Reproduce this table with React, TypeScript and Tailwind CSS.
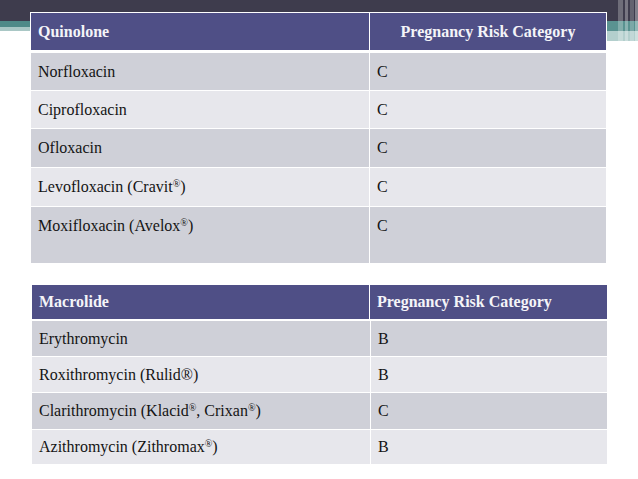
import React from "react";

type Row = { name: React.ReactNode; cat: string; h: string; top?: boolean };

const Reg = () => <sup className="text-[10px]">®</sup>;

const quinolones: Row[] = [
  { name: "Norfloxacin", cat: "C", h: "h-[37px]" },
  { name: "Ciprofloxacin", cat: "C", h: "h-[37px]" },
  { name: "Ofloxacin", cat: "C", h: "h-[38px]" },
  { name: <>Levofloxacin (Cravit<Reg />)</>, cat: "C", h: "h-[38px]" },
  { name: <>Moxifloxacin (Avelox<Reg />)</>, cat: "C", h: "h-[56px]", top: true },
];

const macrolides: Row[] = [
  { name: "Erythromycin", cat: "B", h: "h-[35px]" },
  { name: "Roxithromycin (Rulid®)", cat: "B", h: "h-[35px]" },
  { name: <>Clarithromycin (Klacid<Reg />, Crixan<Reg />)</>, cat: "C", h: "h-[36px]" },
  { name: <>Azithromycin (Zithromax<Reg />)</>, cat: "B", h: "h-[34px]" },
];

function BodyRow({ r, i }: { r: Row; i: number }) {
  const bg = i % 2 === 0 ? "bg-[#cfd0d8]" : "bg-[#e7e7ec]";
  const align = r.top ? "items-start pt-[9px]" : "items-center";
  return (
    <div className={`flex gap-px ${r.h}`}>
      <div className={`w-[338px] flex ${align} pl-[7px] ${bg}`}>
        <span>{r.name}</span>
      </div>
      <div className={`flex-1 flex ${align} pl-[7px] ${bg}`}>
        <span>{r.cat}</span>
      </div>
    </div>
  );
}

export default function App() {
  return (
    <div className="font-serif">
      <div className="relative w-[638px] h-[479px] bg-white overflow-hidden font-['Liberation_Serif'] text-[16px] leading-[20px] text-[#141414]">
        {/* slide background decoration */}
        <div className="absolute left-0 top-0 w-full h-[21px] bg-[#3e3c4d]" />
        <div className="absolute left-0 top-[21px] w-full h-[6px] bg-[#4f8a88]" />
        <div className="absolute left-0 top-[27px] w-full h-[4px] bg-[#a9c7c5]" />
        <div className="absolute left-[606px] top-[21px] w-[32px] h-[10px] bg-[#5a9391]" />
        <div className="absolute left-[606px] top-[31px] w-[32px] h-[10px] bg-[#b3cfcd]" />
        <div className="absolute left-[618px] top-0 w-[5px] h-[43px] bg-white/25" />
        <div className="absolute left-[625px] top-0 w-[3px] h-[43px] bg-white/30" />
        <div className="absolute left-[630px] top-0 w-[4px] h-[43px] bg-white/20" />
        <div className="absolute left-[635px] top-0 w-[3px] h-[43px] bg-white/35" />

        <div className="relative flex flex-col pt-[12px] pl-[30px]">
          {/* Quinolone table */}
          <div className="w-[577px] border border-white bg-white flex flex-col">
            <div className="flex gap-px h-[37px] font-bold text-[#f4f4f8]">
              <div className="w-[338px] flex items-center pl-[7px] bg-[#4f4f86]">Quinolone</div>
              <div className="flex-1 flex items-center justify-center bg-[#4f4f86]">Pregnancy Risk Category</div>
            </div>
            <div className="flex flex-col gap-px mt-[3px]">
              {quinolones.map((r, i) => (
                <BodyRow key={i} r={r} i={i} />
              ))}
            </div>
          </div>

          {/* Macrolide table */}
          <div className="w-[575px] ml-[2px] mt-[21px] bg-white flex flex-col">
            <div className="flex gap-px h-[34px] font-bold text-[#f4f4f8]">
              <div className="w-[337px] flex items-center pl-[7px] bg-[#4f4f86]">Macrolide</div>
              <div className="flex-1 flex items-center pl-[7px] bg-[#4f4f86]">Pregnancy Risk Category</div>
            </div>
            <div className="flex flex-col gap-px mt-[2px]">
              {macrolides.map((r, i) => (
                <BodyRow key={i} r={r} i={i} />
              ))}
            </div>
          </div>
        </div>
      </div>
    </div>
  );
}
